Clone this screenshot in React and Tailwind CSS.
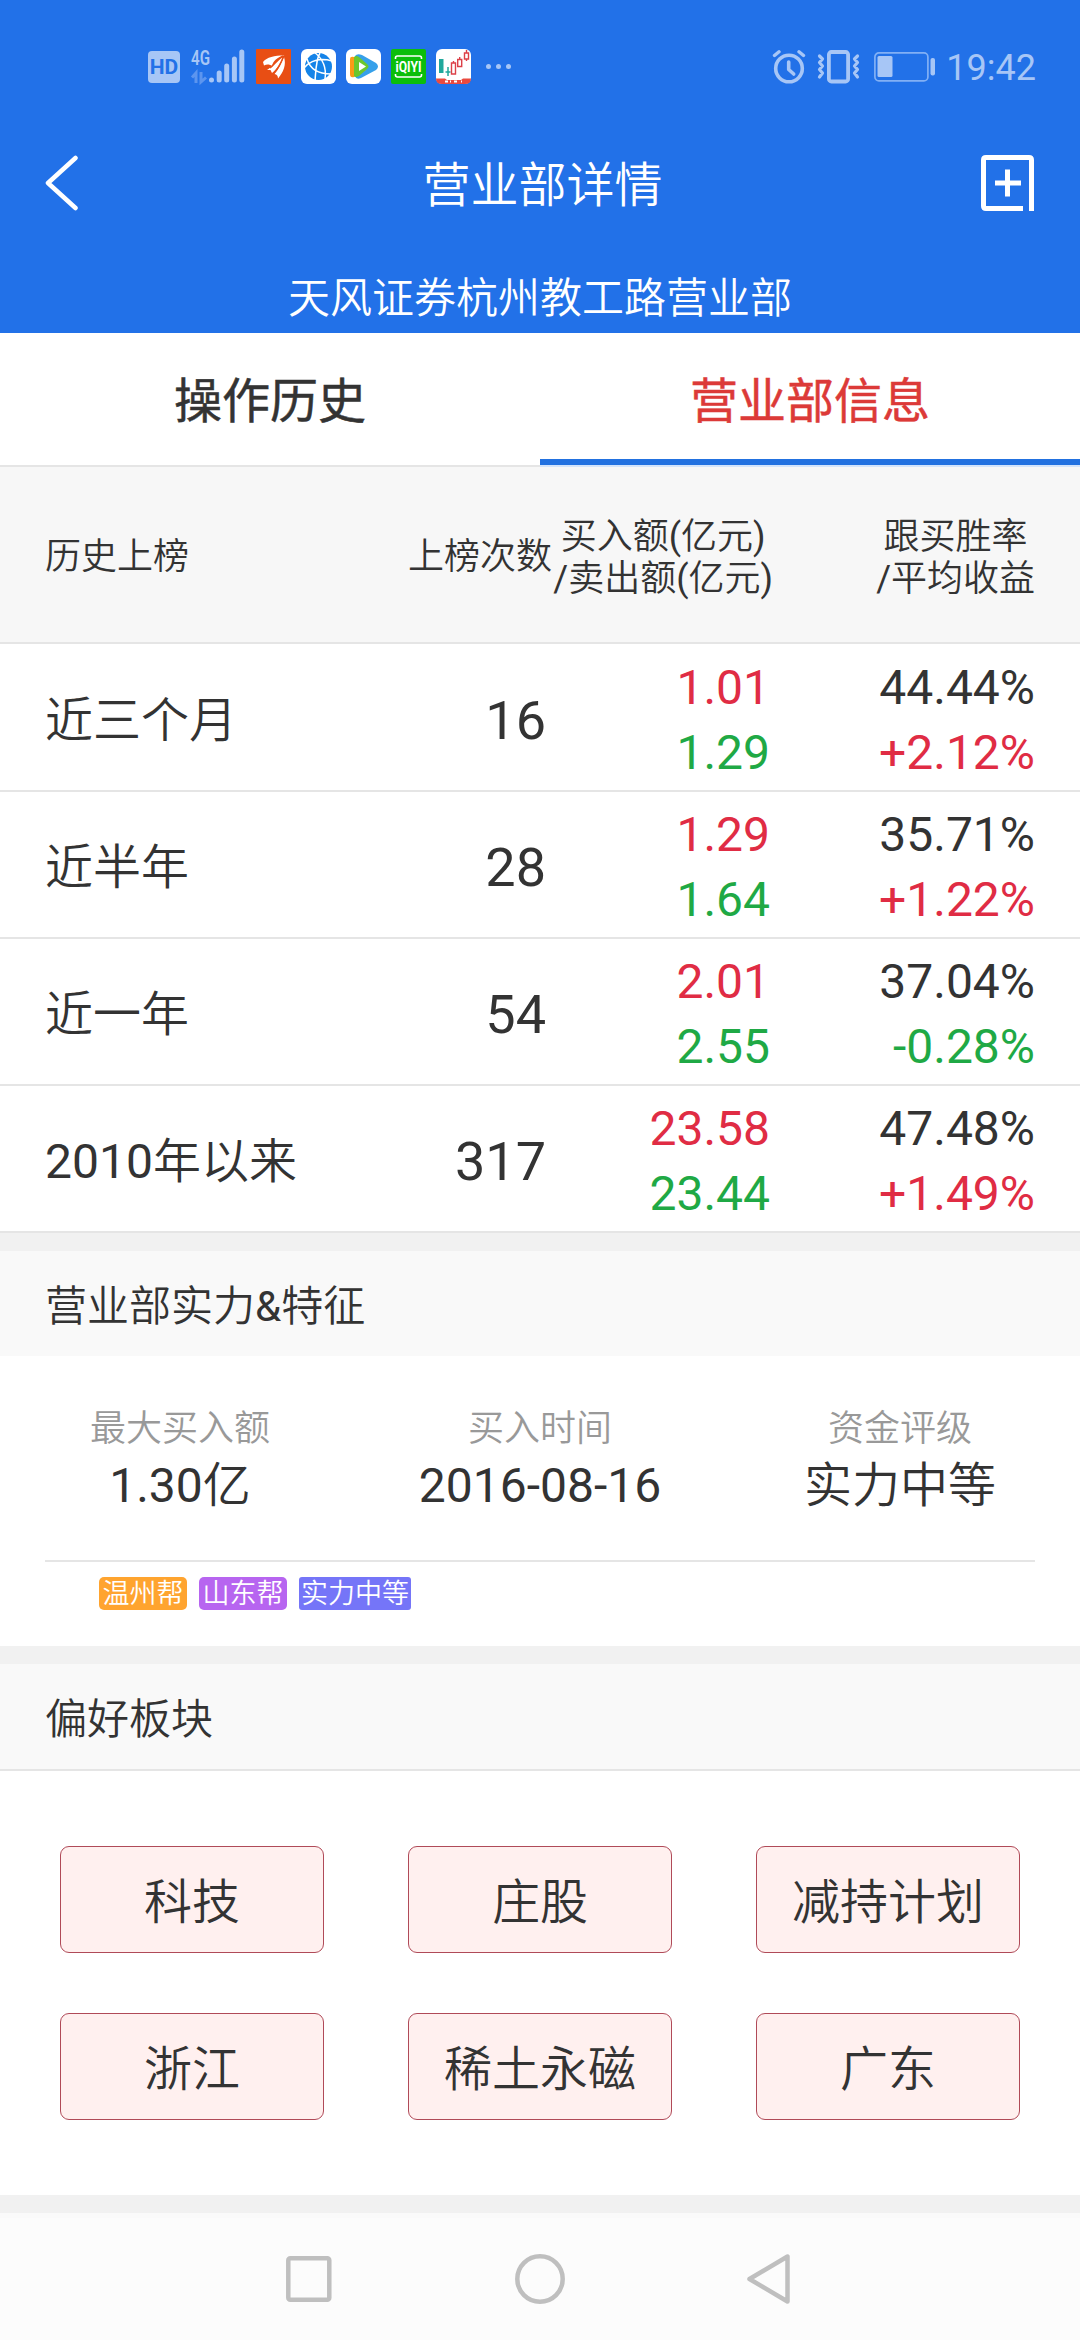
const rows = [
  { label: "近三个月", count: "16", buy: "1.01", sell: "1.29", rate: "44.44%", avg: "+2.12%" },
  { label: "近半年", count: "28", buy: "1.29", sell: "1.64", rate: "35.71%", avg: "+1.22%" },
  { label: "近一年", count: "54", buy: "2.01", sell: "2.55", rate: "37.04%", avg: "-0.28%" },
  { label: "2010年以来", count: "317", buy: "23.58", sell: "23.44", rate: "47.48%", avg: "+1.49%" },
];

const facts = [
  ["最大买入额", "1.30亿"],
  ["买入时间", "2016-08-16"],
  ["资金评级", "实力中等"],
];

const sectors = ["科技", "庄股", "减持计划", "浙江", "稀土永磁", "广东"];

function HdIcon() {
  return (
    <div className="flex h-8 w-8 items-center justify-center rounded-[4px] bg-[#a7c6f6] text-[21px] leading-8 font-bold text-[#2271e8]">
      HD
    </div>
  );
}

function SignalIcon() {
  return (
    <svg className="ml-[11px] h-[35px] w-[54px] overflow-visible" viewBox="0 0 54 35">
      <text x="0" y="15.500" fontSize="20" fontWeight="600" fill="#a7c6f6" textLength="19" lengthAdjust="spacingAndGlyphs">4G</text>
      <path d="M1 28.500 5 24v10M10 23v10l5-4.500" fill="none" stroke="#5c95ef" strokeWidth="3" />
      <g stroke="#a7c6f6" strokeWidth="5" strokeLinecap="round">
        <path d="M20.500 31v.1M28.200 24v7M35.700 17v14M43.400 10v21M50.800 3v28" />
      </g>
    </svg>
  );
}

function AppIcons() {
  return (
    <div className="ml-[11px] flex gap-2.5">
      <svg className="h-[35px] w-[35px]" viewBox="0 0 35 35">
        <rect width="35" height="35" rx="1" fill="#e84e14" />
        <path d="M7 13C11 8 18 6.500 28.500 6.500 21 8 17 12 16 17c-2-1.500-5-2-8-.5Z" fill="#fff" />
        <path d="M11 21C16 18 20 12 27 7.500 25 14 21 20 16 24l-1.500-3Z" fill="#fff" />
        <path d="M18.500 25C23 20 26 13 28 8c2.500 8-.5 15-6 21.500 0-2.500-1-4-3.500-4.500Z" fill="#fff" />
        <path d="M14 19c4-3 8-9 13-12M17 25c5-5 8-11 10.500-17.500" stroke="#e84e14" strokeWidth="1.500" fill="none" />
      </svg>
      <svg className="h-[35px] w-[35px]" viewBox="0 0 35 35">
        <rect width="35" height="35" rx="6" fill="#fff" />
        <circle cx="17.500" cy="17.500" r="13.500" fill="#1483e8" />
        <path d="M3 19c7-8 17-10 28-7M13 3c8 6 13 14 11 27M6 10c3 10 10 15 24 15M19 4c-4 6-4 16-5 28" stroke="#fff" strokeWidth="1.500" fill="none" />
      </svg>
      <svg className="h-[35px] w-[35px]" viewBox="0 0 35 35">
        <rect width="35" height="35" rx="6" fill="#fff" />
        <path d="M9 7Q11 4 16 6L30 14q4 3.500 0 7L15 29q-5 2-6-2Z" fill="#36a0ea" />
        <path d="M4 10q0-3 4-2l12 7v6L8 28q-4 1-4-3Z" fill="#fb9a17" />
        <path d="M8 8q2-2 5 0l8 7q3 2.500 0 5l-8 7q-4 2-5 0Z" fill="#6cc72d" />
        <path d="M13 13v9l7-4.500Z" fill="#fff" />
      </svg>
      <svg className="h-[35px] w-[35px] overflow-visible" viewBox="0 0 35 35">
        <rect width="35" height="35" rx="2" fill="#0bbe0b" />
        <path d="M4.500 10V9q0-2 2-2h22q2 0 2 2v1M4.500 25v1q0 2 2 2h22q2 0 2-2v-1" stroke="#fff" strokeWidth="1.600" fill="none" />
        <text x="4.500" y="23" fontSize="14.500" fontWeight="700" fill="#fff" textLength="26" lengthAdjust="spacingAndGlyphs">iQIYI</text>
      </svg>
      <svg className="h-[35px] w-[35px]" viewBox="0 0 35 35">
        <rect width="35" height="35" rx="6" fill="#fff" />
        <path d="M12 18v9M9.500 23h5" stroke="#20a89c" strokeWidth="1.500" />
        <path d="M3 10h4.500v14H3Z" fill="#20a89c" />
        <g fill="none" stroke="#dc4048" strokeWidth="1.400">
          <path d="M15.500 14h4v11h-4ZM21.700 10.500h4v7h-4ZM28.500 4h4v6h-4ZM17.500 12v2M23.700 8v2.500M30.500 1v3M30.500 10v2" />
        </g>
        <path d="M0 29.500h9l2 1.500h14l2-1.500h8q0 5.500-6 5.500H6q-6 0-6-5.500Z" fill="#ea4a3f" />
        <path d="M9 32.500h3m2 0h1m3 0h3m4 0h1" stroke="#fff" strokeWidth="2" />
      </svg>
    </div>
  );
}

function DeviceIcons() {
  return (
    <div className="flex items-center">
      <svg className="h-[34px] w-[34px]" viewBox="0 0 34 34" fill="none" stroke="#a7c6f6" strokeLinecap="round">
        <circle cx="17" cy="18.500" r="13.300" strokeWidth="3.600" />
        <path d="M16.700 12v7.500l5 4.500" strokeWidth="3.600" strokeLinejoin="round" />
        <path d="M2.500 5.500 7 1.800M31.500 5.500 27 1.800" strokeWidth="3.400" />
      </svg>
      <svg className="ml-[11px] h-[34px] w-[43px]" viewBox="0 0 43 34" fill="none" stroke="#a7c6f6" strokeWidth="3.800" strokeLinecap="round" strokeLinejoin="round">
        <rect x="11.900" y="2" width="19.200" height="29.500" rx="2.500" />
        <path d="m2.500 6 3 3-3 3.500 3 3.500-3 3.500 3 3.500-3 4M40.500 6l-3 3 3 3.500-3 3.500 3 3.500-3 3.500 3 4" strokeWidth="3.200" />
      </svg>
      <svg className="ml-[14px] h-[30px] w-[62px]" viewBox="0 0 62 30">
        <rect x=".9" y=".9" width="53" height="28" rx="4" fill="none" stroke="#82b0f5" strokeWidth="1.700" />
        <rect x="3.500" y="4" width="15" height="21" rx="1.500" fill="#a7c6f6" />
        <rect x="56.500" y="6" width="4.500" height="17.500" rx="2" fill="#a7c6f6" />
      </svg>
      <span className="ml-[10px] pt-[2px] text-[36px] leading-[36px] text-[#a7c6f6]">19:42</span>
    </div>
  );
}

export default function App() {
  return (
    <div className="flex h-[2340px] w-[1080px] flex-col overflow-hidden bg-white font-[Roboto,'Noto_Sans_CJK_SC_DemiLight','Noto_Sans_CJK_SC',sans-serif] whitespace-nowrap text-[#333]">
      <header className="h-[333px] bg-[#2271e8] text-white">
        <div className="flex h-[133px] items-center justify-between pr-[44px] pl-[148px]">
          <div className="flex items-center">
            <HdIcon />
            <SignalIcon />
            <AppIcons />
            <div className="ml-[15px] flex gap-[5px]">
              <i className="h-[5px] w-[5px] rounded-full bg-[#a7c6f6]" />
              <i className="h-[5px] w-[5px] rounded-full bg-[#a7c6f6]" />
              <i className="h-[5px] w-[5px] rounded-full bg-[#a7c6f6]" />
            </div>
          </div>
          <DeviceIcons />
        </div>
        <div className="flex h-[100px] items-center justify-between px-[45px]">
          <svg className="h-[56px] w-[54px]" viewBox="0 0 54 56" fill="none" stroke="#fff" strokeWidth="4.500" strokeLinecap="round" strokeLinejoin="round">
            <path d="M30.500 3 3 28l27.500 25" />
          </svg>
          <h1 className="pt-[6px] pl-[5px] text-[48px] leading-[56px] font-normal">营业部详情</h1>
          <svg className="h-[56px] w-[54px]" viewBox="0 0 54 56" fill="none" stroke="#fff" strokeWidth="5">
            <path d="M42 53.500H5q-2.500 0-2.500-2.500V5q0-2.500 2.500-2.500h43q2.500 0 2.500 2.500v51M26.500 14.500v27M14 28h26" />
          </svg>
        </div>
        <div className="flex h-[100px] items-end justify-center pb-[6px] text-[42px] leading-[56px]">天风证券杭州教工路营业部</div>
      </header>

      <nav className="grid h-[134px] grid-cols-2 text-center font-['Noto_Sans_CJK_SC',sans-serif] text-[48px] leading-[128px] [-webkit-text-stroke:0.5px_currentColor]">
        <div className="h-[134px] border-b-2 border-[#e5e5e5]">操作历史</div>
        <div className="h-[134px] border-b-2 border-[#d3e4fb] text-[#dc3a38]">
          <div className="h-[132px] border-b-[6px] border-[#2271e0]">营业部信息</div>
        </div>
      </nav>

      <div className="grid h-[177px] grid-cols-[252px_255px_221px_262px] items-center border-b-2 border-[#e5e5e5] bg-[#f7f7f7] px-[45px] text-[36px] leading-[42px]">
        <div className="pt-1">历史上榜</div>
        <div className="pt-1 text-right">上榜次数</div>
        <div className="flex justify-end pt-1.5 text-center">
          <div>买入额(亿元)<br />/卖出额(亿元)</div>
        </div>
        <div className="flex justify-end pt-1.5 text-center">
          <div>跟买胜率<br />/平均收益</div>
        </div>
      </div>

      <div className="h-[589px] pt-px">
        {rows.map((r) => (
          <div key={r.label} className="grid h-[147px] grid-cols-[252px_249px_224px_265px] items-center border-b-2 border-[#e5e5e5] px-[45px] text-[48px] leading-[65px]">
            <div className="pt-[5px]">{r.label}</div>
            <div className="pt-[6px] text-right text-[54px]">{r.count}</div>
            <div className="pt-[5px] text-right">
              <div className="text-[#e02c44]">{r.buy}</div>
              <div className="text-[#1fa945]">{r.sell}</div>
            </div>
            <div className="pt-[5px] text-right">
              <div>{r.rate}</div>
              <div className={r.avg.startsWith("+") ? "text-[#e02c44]" : "text-[#1fa945]"}>{r.avg}</div>
            </div>
          </div>
        ))}
      </div>

      <div className="h-[18px] bg-[#f1f1f1]" />
      <h2 className="h-[105px] bg-[#f9f9f9] px-[45px] pt-[3px] text-[42px] leading-[105px]">营业部实力&amp;特征</h2>
      <section className="h-[290px] px-[45px]">
        <div className="grid h-[206px] grid-cols-[270px_450px_270px] border-b-2 border-[#e5e5e5] pt-[45px] text-center">
          {facts.map(([k, v]) => (
            <div key={k}>
              <div className="text-[36px] leading-[56px] text-[#999]">{k}</div>
              <div className="text-[48px] leading-[57px]">{v}</div>
            </div>
          ))}
        </div>
        <div className="flex gap-3 pt-[15px] pl-[54px] text-center text-[27px] leading-[35px] text-white">
          <span className="h-[33px] w-[88px] rounded-[5px] bg-[#ffa42f]">温州帮</span>
          <span className="h-[33px] w-[88px] rounded-[5px] bg-[#b765f0]">山东帮</span>
          <span className="h-[33px] w-[112px] rounded-[3px] bg-[#7575f8]">实力中等</span>
        </div>
      </section>

      <div className="h-[18px] bg-[#f1f1f1]" />
      <h2 className="h-[107px] border-b-2 border-[#e5e5e5] bg-[#f9f9f9] px-[45px] pt-[3px] text-[42px] leading-[105px]">偏好板块</h2>
      <section className="grid h-[424px] grid-cols-3 content-start gap-x-[84px] gap-y-[60px] px-[60px] pt-[75px]">
        {sectors.map((s) => (
          <div key={s} className="h-[107px] rounded-[9px] border border-[#b04a58] bg-[#fff0ef] pt-[3px] text-center text-[48px] leading-[105px]">{s}</div>
        ))}
      </section>
      <div className="h-[18px] bg-[#f1f1f1]" />

      <footer className="flex flex-1 items-center border-t-[5px] border-[#fafafa] bg-[#fcfcfc] pl-[284px]">
        <svg className="h-[50px] w-[50px]" viewBox="0 0 50 50" fill="none" stroke="#bfbfbf" strokeWidth="4.500">
          <rect x="4.300" y="4.300" width="41" height="41.500" rx="2" />
        </svg>
        <svg className="ml-[181px] h-[50px] w-[50px]" viewBox="0 0 50 50" fill="none" stroke="#bfbfbf" strokeWidth="4.500">
          <circle cx="25" cy="25" r="22.700" />
        </svg>
        <svg className="ml-[182px] h-[50px] w-[43px]" viewBox="0 0 43 50" fill="none" stroke="#bfbfbf" strokeWidth="4.500" strokeLinejoin="round">
          <path d="M40.500 2.500v45L2.500 25Z" />
        </svg>
      </footer>
    </div>
  );
}
